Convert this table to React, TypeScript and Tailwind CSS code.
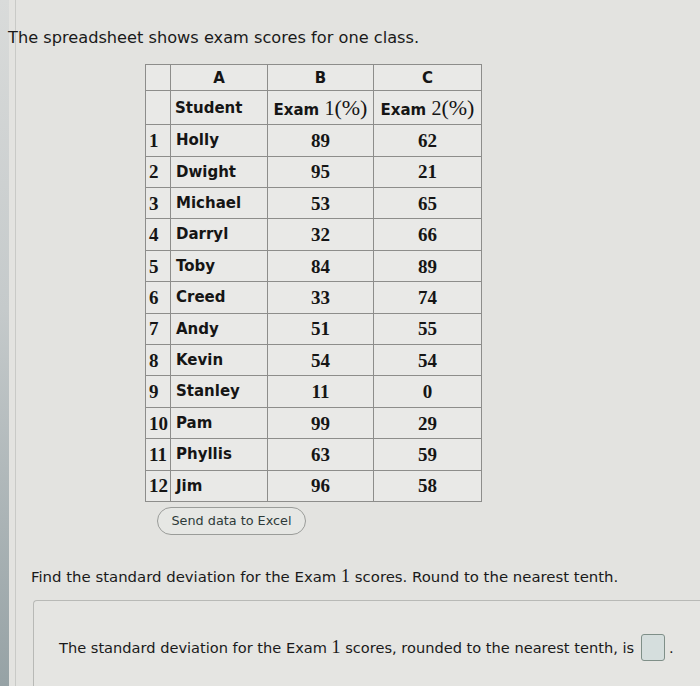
import React from "react";

const rows: [string, string, string, string][] = [
  ["1", "Holly", "89", "62"],
  ["2", "Dwight", "95", "21"],
  ["3", "Michael", "53", "65"],
  ["4", "Darryl", "32", "66"],
  ["5", "Toby", "84", "89"],
  ["6", "Creed", "33", "74"],
  ["7", "Andy", "51", "55"],
  ["8", "Kevin", "54", "54"],
  ["9", "Stanley", "11", "0"],
  ["10", "Pam", "99", "29"],
  ["11", "Phyllis", "63", "59"],
  ["12", "Jim", "96", "58"],
];

const sans = "font-['DejaVu_Sans','Verdana',sans-serif]";
const serif = "font-['Liberation_Serif','Times_New_Roman',serif]";

export default function App() {
  return (
    <div className="w-[700px] h-[686px] overflow-hidden flex bg-[#e3e3e0] text-[#1c1c1c]">
      <div className="w-[9px] shrink-0 bg-[linear-gradient(to_bottom,#d9dbda,#c5cacb_45%,#96a2a5)]" />
      <div className="w-[7px] shrink-0 border-r border-[#c9cac7]" />
      <div className="flex-1 flex flex-col">
        <p className={`${sans} text-[16.2px] pt-[26px] ml-[-8px] text-[#1a1a1a]`}>
          The spreadsheet shows exam scores for one class.
        </p>
        <div className="ml-[129px] mt-[14px]">
          <table className="border-collapse bg-[#e9e9e7] text-[#151515]">
            <tbody>
              <tr className="h-[26px]">
                <td className="w-[25px] border border-[#8d8d8b]" />
                <td className={`w-[97px] border border-[#8d8d8b] text-center font-bold text-[15px] ${sans}`}>A</td>
                <td className={`w-[106px] border border-[#8d8d8b] text-center font-bold text-[15px] ${sans}`}>B</td>
                <td className={`w-[108px] border border-[#8d8d8b] text-center font-bold text-[15px] ${sans}`}>C</td>
              </tr>
              <tr className="h-[32px]">
                <td className="border border-[#8d8d8b]" />
                <td className={`border border-[#8d8d8b] pl-[4px] font-bold text-[15px] ${sans}`}>Student</td>
                <td className="border border-[#8d8d8b] text-center whitespace-nowrap px-0">
                  <span className={`${sans} font-bold text-[15px]`}>Exam </span>
                  <span className={`${serif} text-[20px]`}>1</span>
                  <span className={`${serif} text-[22px]`}>(%)</span>
                </td>
                <td className="border border-[#8d8d8b] text-center whitespace-nowrap px-0">
                  <span className={`${sans} font-bold text-[15px]`}>Exam </span>
                  <span className={`${serif} text-[20px]`}>2</span>
                  <span className={`${serif} text-[22px]`}>(%)</span>
                </td>
              </tr>
              {rows.map(([i, n, a, b]) => (
                <tr key={i} className="h-[31.4px]">
                  <td className={`border border-[#8d8d8b] pl-[3px] ${serif} font-bold text-[19px] leading-none`}>{i}</td>
                  <td className={`border border-[#8d8d8b] pl-[5px] ${sans} font-bold text-[15px]`}>{n}</td>
                  <td className={`border border-[#8d8d8b] text-center ${serif} font-bold text-[19px] leading-none`}>{a}</td>
                  <td className={`border border-[#8d8d8b] text-center ${serif} font-bold text-[19px] leading-none`}>{b}</td>
                </tr>
              ))}
            </tbody>
          </table>
          <button
            className={`mt-[5px] ml-[12px] h-[28px] w-[149px] rounded-full border border-[#9a9c99] bg-[#e6e7e4] ${sans} text-[12.8px] text-[#2d3a39]`}
          >
            Send data to Excel
          </button>
        </div>
        <p className={`${sans} text-[14.9px] ml-[15px] mt-[28px] text-[#1a1a1a]`}>
          Find the standard deviation for the Exam <span className={`${serif} text-[18px]`}>1</span> scores. Round to the nearest tenth.
        </p>
        <div className="ml-[17px] mt-[10px] flex-1 border-l border-t border-[#b8b9b6] rounded-tl-[4px] bg-[#e5e5e2] pl-[25px] pt-[33px]">
          <p className={`${sans} text-[14.6px] text-[#1a1a1a] flex items-center whitespace-nowrap`}>
            The standard deviation for the Exam&nbsp;<span className={`${serif} text-[18px]`}>1</span>&nbsp;scores, rounded to the nearest tenth, is
            <span className="inline-block ml-[7px] w-[24px] h-[27px] rounded-[3px] border border-[#7f8f88] bg-[#d5dedd]" />
            <span className="ml-[4px]">.</span>
          </p>
        </div>
      </div>
    </div>
  );
}
